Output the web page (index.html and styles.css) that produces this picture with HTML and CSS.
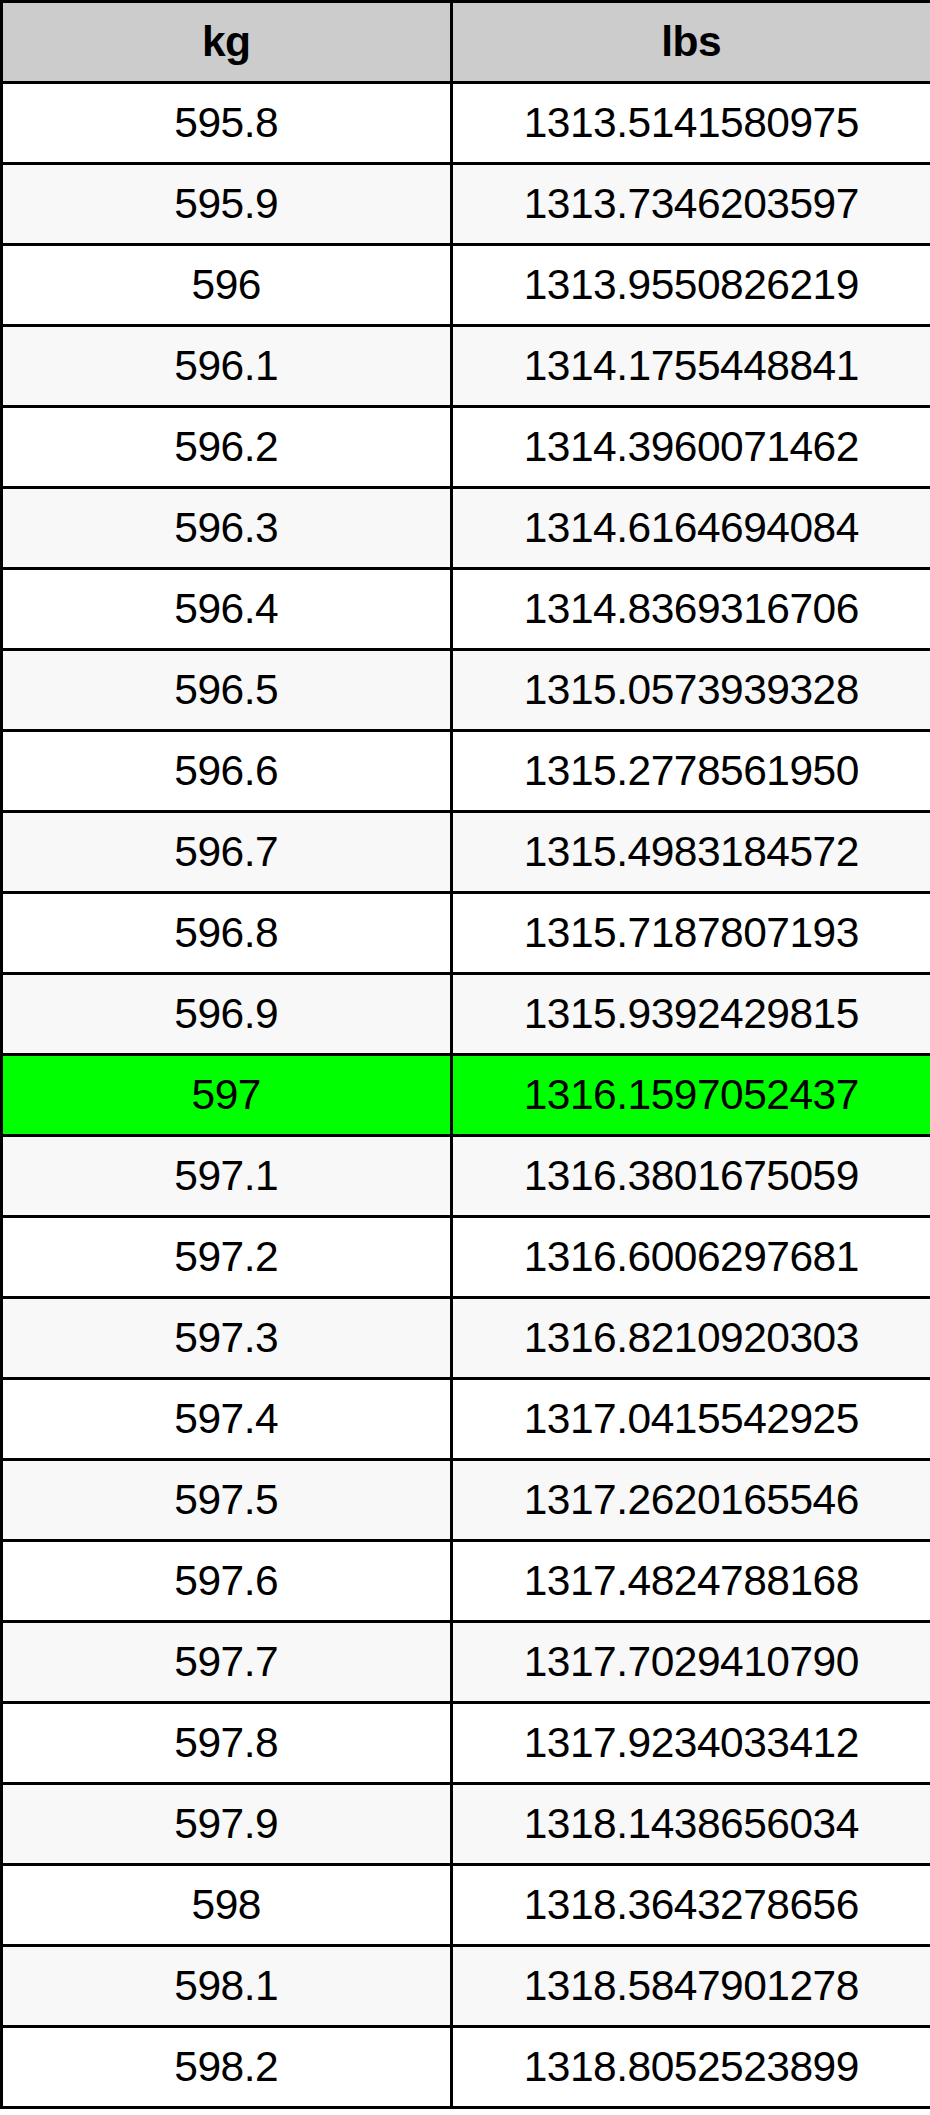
FILE: index.html
```html
<!DOCTYPE html>
<html>
<head>
<meta charset="utf-8">
<link rel="stylesheet" href="styles.css">
</head>
<body>
<table class="conv">
<colgroup><col class="c-kg"><col class="c-lbs"></colgroup>
<thead>
<tr><th>kg</th><th>lbs</th></tr>
</thead>
<tbody>
<tr><td>595.8</td><td>1313.5141580975</td></tr>
<tr><td>595.9</td><td>1313.7346203597</td></tr>
<tr><td>596</td><td>1313.9550826219</td></tr>
<tr><td>596.1</td><td>1314.1755448841</td></tr>
<tr><td>596.2</td><td>1314.3960071462</td></tr>
<tr><td>596.3</td><td>1314.6164694084</td></tr>
<tr><td>596.4</td><td>1314.8369316706</td></tr>
<tr><td>596.5</td><td>1315.0573939328</td></tr>
<tr><td>596.6</td><td>1315.2778561950</td></tr>
<tr><td>596.7</td><td>1315.4983184572</td></tr>
<tr><td>596.8</td><td>1315.7187807193</td></tr>
<tr><td>596.9</td><td>1315.9392429815</td></tr>
<tr class="hl"><td>597</td><td>1316.1597052437</td></tr>
<tr><td>597.1</td><td>1316.3801675059</td></tr>
<tr><td>597.2</td><td>1316.6006297681</td></tr>
<tr><td>597.3</td><td>1316.8210920303</td></tr>
<tr><td>597.4</td><td>1317.0415542925</td></tr>
<tr><td>597.5</td><td>1317.2620165546</td></tr>
<tr><td>597.6</td><td>1317.4824788168</td></tr>
<tr><td>597.7</td><td>1317.7029410790</td></tr>
<tr><td>597.8</td><td>1317.9234033412</td></tr>
<tr><td>597.9</td><td>1318.1438656034</td></tr>
<tr><td>598</td><td>1318.3643278656</td></tr>
<tr><td>598.1</td><td>1318.5847901278</td></tr>
<tr><td>598.2</td><td>1318.8052523899</td></tr>
</tbody>
</table>
</body>
</html>
```
FILE: styles.css
```css
html, body {
  margin: 0;
  padding: 0;
  background: #ffffff;
}

.conv {
  width: 930px;
  border-collapse: collapse;
  table-layout: fixed;
  font-family: "Liberation Sans", Arial, sans-serif;
  font-size: 42.5px;
  letter-spacing: -0.5px;
  color: #000000;
}

.c-kg { width: 449.5px; }
.c-lbs { width: 480.5px; }

.conv th,
.conv td {
  border: 3px solid #000000;
  height: 78px;
  padding: 0;
  text-align: center;
  vertical-align: middle;
  line-height: 1;
}

.conv th {
  background: #cccccc;
  font-weight: bold;
}

.conv tbody tr:nth-child(odd) td { background: #ffffff; }
.conv tbody tr:nth-child(even) td { background: #f8f8f8; }
.conv tbody tr.hl td { background: #00ff00; }
```
